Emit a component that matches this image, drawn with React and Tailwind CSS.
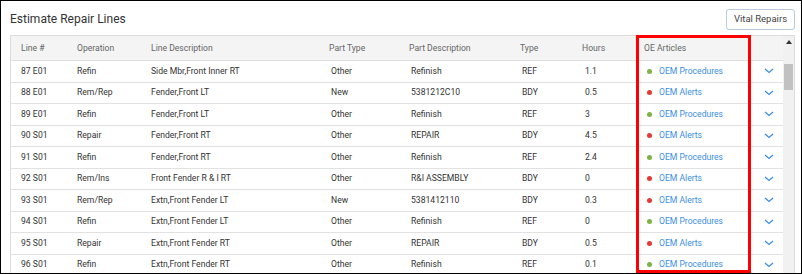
import React from 'react';

const rows = [
    { line: '87 E01', op: 'Refin', desc: 'Side Mbr,Front Inner RT', ptype: 'Other', pdesc: 'Refinish', type: 'REF', hours: '1.1', alert: false },
    { line: '88 E01', op: 'Rem/Rep', desc: 'Fender,Front LT', ptype: 'New', pdesc: '5381212C10', type: 'BDY', hours: '0.5', alert: true },
    { line: '89 E01', op: 'Refin', desc: 'Fender,Front LT', ptype: 'Other', pdesc: 'Refinish', type: 'REF', hours: '3', alert: false },
    { line: '90 S01', op: 'Repair', desc: 'Fender,Front RT', ptype: 'Other', pdesc: 'REPAIR', type: 'BDY', hours: '4.5', alert: true },
    { line: '91 S01', op: 'Refin', desc: 'Fender,Front RT', ptype: 'Other', pdesc: 'Refinish', type: 'REF', hours: '2.4', alert: false },
    { line: '92 S01', op: 'Rem/Ins', desc: 'Front Fender R & I RT', ptype: 'Other', pdesc: 'R&I ASSEMBLY', type: 'BDY', hours: '0', alert: true },
    { line: '93 S01', op: 'Rem/Rep', desc: 'Extn,Front Fender LT', ptype: 'New', pdesc: '5381412110', type: 'BDY', hours: '0.3', alert: true },
    { line: '94 S01', op: 'Refin', desc: 'Extn,Front Fender LT', ptype: 'Other', pdesc: 'Refinish', type: 'REF', hours: '0', alert: false },
    { line: '95 S01', op: 'Repair', desc: 'Extn,Front Fender RT', ptype: 'Other', pdesc: 'REPAIR', type: 'BDY', hours: '0.5', alert: true },
    { line: '96 S01', op: 'Refin', desc: 'Extn,Front Fender RT', ptype: 'Other', pdesc: 'Refinish', type: 'REF', hours: '0.1', alert: false },
];

// column template shared by header and rows
const cols = 'grid grid-cols-[56px_74px_178px_80px_110px_62px_63px_117px_32px]';

const Chevron = () => (
    <svg width="10" height="6" viewBox="0 0 10 6" fill="none">
        <path d="M1 1l4 3.5L9 1" stroke="#3b8ee6" strokeWidth="1.3" />
    </svg>
);

const App = () => {
    return (
        <div className="relative w-[802px] h-[274px] border border-black overflow-hidden bg-white font-['Roboto',sans-serif]">
            {/* Title bar */}
            <div className="flex items-start justify-between h-[34px] pl-[9px] pr-[6px]">
                <h2 className="mt-[10px] text-[12px] leading-[16px] text-[#333]">Estimate Repair Lines</h2>
                <button className="mt-[8px] h-[21px] w-[69px] border border-[#b9cbdc] rounded-[3px] text-[9.5px] text-[#444] bg-white">
                    Vital Repairs
                </button>
            </div>

            {/* Table */}
            <div className="flex ml-[9px] mr-[6px] border border-[#dcdcdc]">
                <div className="flex-1">
                    <div className={`${cols} h-[25px] items-center bg-[#f4f4f4] border-b border-[#dedede] text-[8.6px] text-[#666]`}>
                        <div className="pl-[10px]">Line #</div>
                        <div className="pl-[10px]">Operation</div>
                        <div className="pl-[10px]">Line Description</div>
                        <div className="pl-[10px]">Part Type</div>
                        <div className="pl-[10px]">Part Description</div>
                        <div className="pl-[11px]">Type</div>
                        <div className="pl-[11px]">Hours</div>
                        <div className="pl-[10px]">OE Articles</div>
                        <div></div>
                    </div>
                    {rows.map((r) => (
                        <div key={r.line} className={`${cols} h-[21.5px] items-center border-b border-[#e2e2e2] text-[8.6px] text-[#333]`}>
                            <div className="pl-[10px]">{r.line}</div>
                            <div className="pl-[10px]">{r.op}</div>
                            <div className="pl-[10px]">{r.desc}</div>
                            <div className="pl-[12px]">{r.ptype}</div>
                            <div className="pl-[12px]">{r.pdesc}</div>
                            <div className="pl-[13px]">{r.type}</div>
                            <div className="pl-[14px]">{r.hours}</div>
                            <div className="flex items-center pl-[13px]">
                                <span className={`w-[5px] h-[5px] rounded-full ${r.alert ? 'bg-[#e53935]' : 'bg-[#7cb342]'}`}></span>
                                <span className="ml-[7px] text-[#3b8ee6]">{r.alert ? 'OEM Alerts' : 'OEM Procedures'}</span>
                            </div>
                            <div className="flex justify-center pl-[4px]">
                                <Chevron />
                            </div>
                        </div>
                    ))}
                </div>

                {/* Scrollbar */}
                <div className="w-[12px] bg-[#f1f1f1] flex flex-col items-center">
                    <svg className="mt-[4px]" width="6" height="4" viewBox="0 0 6 4">
                        <path d="M0 4L3 0l3 4z" fill="#333" />
                    </svg>
                    <div className="mt-[20px] w-[9px] h-[26px] bg-[#c1c1c1]"></div>
                </div>
            </div>

            {/* Highlight box */}
            <div className="absolute left-[635px] top-[34px] w-[115px] h-[238px] border-[3px] border-[#ff0000]"></div>
        </div>
    );
};

export default App;
